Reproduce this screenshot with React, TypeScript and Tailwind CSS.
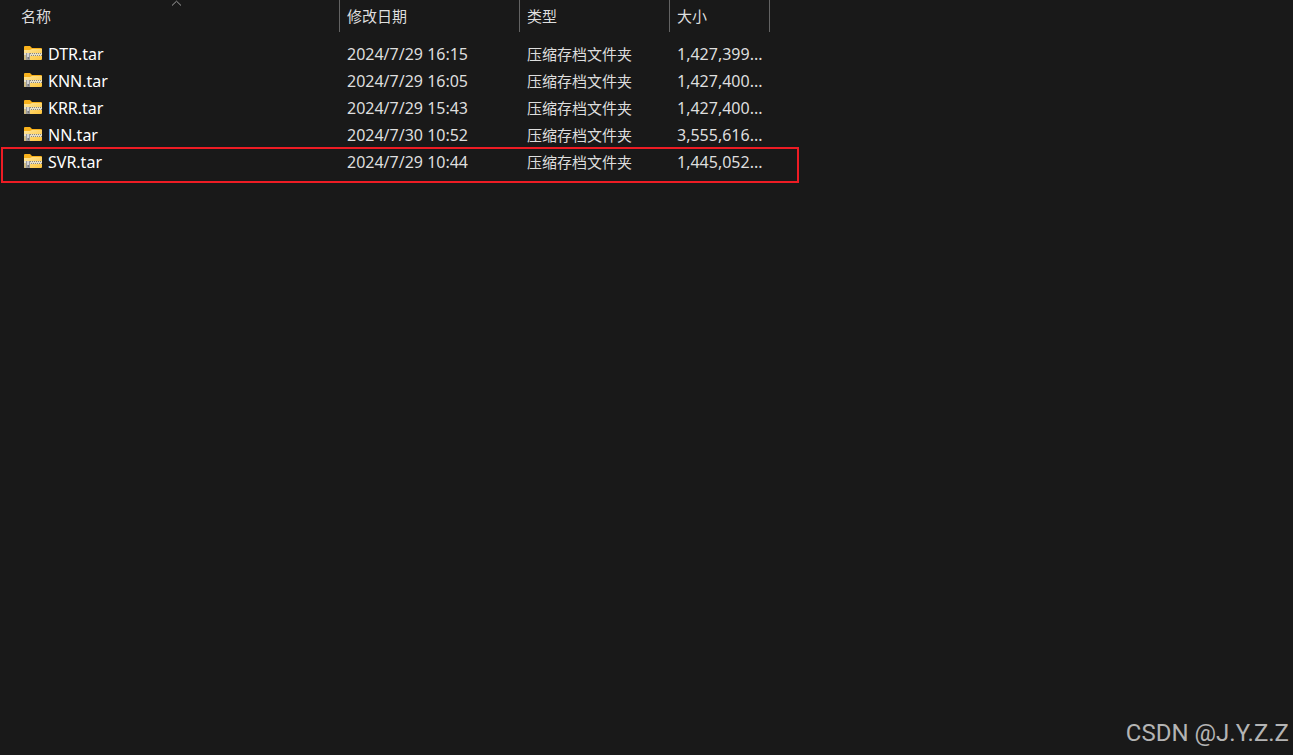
const columns = ["名称", "修改日期", "类型", "大小"];

const files = [
  { name: "DTR.tar", date: "2024/7/29 16:15", size: "1,427,399..." },
  { name: "KNN.tar", date: "2024/7/29 16:05", size: "1,427,400..." },
  { name: "KRR.tar", date: "2024/7/29 15:43", size: "1,427,400..." },
  { name: "NN.tar", date: "2024/7/30 10:52", size: "3,555,616..." },
  { name: "SVR.tar", date: "2024/7/29 10:44", size: "1,445,052...", marked: true },
];

const ZipFolderIcon = () => (
  <svg width="18" height="14" viewBox="0 0 18 14" aria-hidden className="mb-[3px] shrink-0">
    <defs>
      <linearGradient id="folder" x1="0" y1="0" x2="1" y2="1">
        <stop offset="0" stopColor="#ffe69a" />
        <stop offset="1" stopColor="#fcc43c" />
      </linearGradient>
    </defs>
    <path d="M0 1a1 1 0 0 1 1-1h5l2 2h9a1 1 0 0 1 1 1v3H0z" fill="#f9b21c" />
    <path d="M0 4h6l2-1h10V13a1 1 0 0 1-1 1H1a1 1 0 0 1-1-1z" fill="url(#folder)" />
    {/* Zipper */}
    <path d="M0 7h18v3H0z" fill="#e6dfc8" />
    <path d="M6 7.5h12M7 9.5h11" stroke="#8c8676" strokeDasharray="1 1" />
    <path d="M0 9h3v5H1a1 1 0 0 1-1-1z" fill="#d0bd84" />
    <path d="M2 7h4v7H2z" fill="#9b9b9b" />
    <path d="M3 7h2v4H3z" fill="#d4d4d4" />
    <path d="M4 11h1v2H4z" fill="#777777" />
  </svg>
);

const App = () => {
  return (
    <div className="flex min-h-screen flex-col justify-between bg-[#191919] font-['Noto_Sans','Noto_Sans_CJK_SC',sans-serif] text-[15px] text-[#dedede]">
      <table className="w-full table-fixed border-separate border-spacing-0 text-left leading-[27px]">
        <colgroup>
          <col className="w-[340px]" />
          <col className="w-[180px]" />
          <col className="w-[150px]" />
          <col className="w-[100px]" />
          <col />
        </colgroup>

        <thead>
          <tr className="h-8">
            {columns.map((column, i) => (
              <th
                key={column}
                className={`relative border-r border-[#636363] p-0 font-normal ${i === 0 ? "pl-[21px]" : "pl-[7px]"}`}
              >
                <button type="button" className="block">
                  {column}
                </button>
                {i === 0 && (
                  <svg
                    width="11"
                    height="6"
                    viewBox="0 0 11 6"
                    aria-hidden
                    className="absolute top-0 left-[171px] fill-none stroke-[#a0a0a0]"
                  >
                    <path d="M1 5.5 5.5 1.2 10 5.5" />
                  </svg>
                )}
              </th>
            ))}
            <th />
          </tr>
        </thead>

        <tbody className="before:block before:h-[9px]">
          {files.map((file) => (
            <tr key={file.name} className="relative h-[27px]">
              <td className="p-0 pl-6 text-base leading-[27px] text-white">
                <div className="flex items-center gap-1.5">
                  <ZipFolderIcon />
                  {file.name}
                </div>
                {file.marked && (
                  <div className="absolute -top-0.5 left-px h-9 w-[798px] border-2 border-[#ed1c24]" />
                )}
              </td>
              <td className="p-0 pl-[7px] text-base leading-[27px]">{file.date}</td>
              <td className="p-0 pl-[7px]">压缩存档文件夹</td>
              <td className="p-0 pl-[7px] text-base leading-[27px]">{file.size}</td>
              <td />
            </tr>
          ))}
        </tbody>
      </table>

      <p className="self-end px-1 pb-2 font-['Roboto',sans-serif] text-2xl leading-7 text-[#b4b4b4]">
        CSDN @J.Y.Z.Z
      </p>
    </div>
  );
};

export default App;
